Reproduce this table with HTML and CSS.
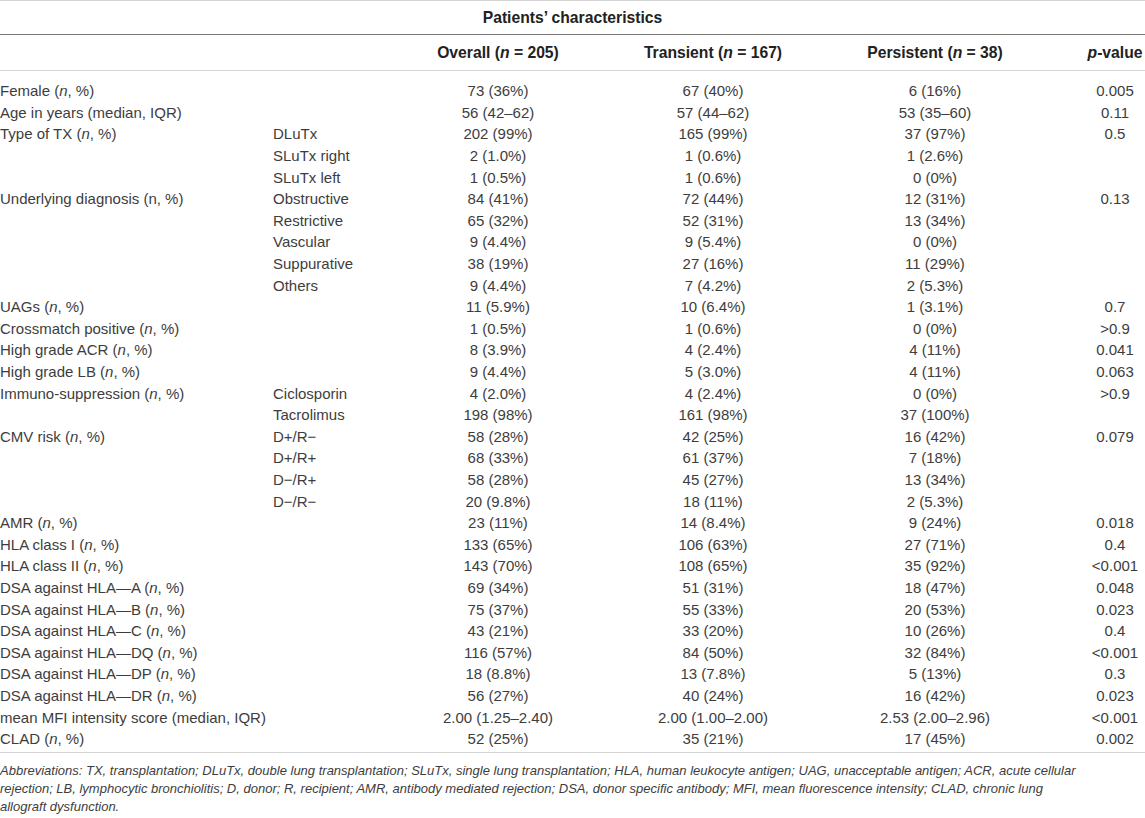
FILE: index.html
```html
<!DOCTYPE html>
<html>
<head>
<meta charset="utf-8">
<link rel="stylesheet" href="styles.css">
</head>
<body>
<table class="tbl">
  <colgroup>
    <col class="c-label"><col class="c-sub"><col class="c-overall"><col class="c-trans"><col class="c-pers"><col class="c-p">
  </colgroup>
  <thead>
    <tr class="title-row"><th colspan="6">Patients’ characteristics</th></tr>
    <tr class="head-row">
      <th></th><th></th>
      <th>Overall (<i>n</i> = 205)</th>
      <th>Transient (<i>n</i> = 167)</th>
      <th>Persistent (<i>n</i> = 38)</th>
      <th class="pv"><i>p</i>-value</th>
    </tr>
  </thead>
  <tbody>
    <tr class="first"><td>Female (<i>n</i>, %)</td><td></td><td>73 (36%)</td><td>67 (40%)</td><td>6 (16%)</td><td class="pv">0.005</td></tr>
    <tr><td>Age in years (median, IQR)</td><td></td><td>56 (42–62)</td><td>57 (44–62)</td><td>53 (35–60)</td><td class="pv">0.11</td></tr>
    <tr><td>Type of TX (<i>n</i>, %)</td><td>DLuTx</td><td>202 (99%)</td><td>165 (99%)</td><td>37 (97%)</td><td class="pv">0.5</td></tr>
    <tr><td></td><td>SLuTx right</td><td>2 (1.0%)</td><td>1 (0.6%)</td><td>1 (2.6%)</td><td class="pv"></td></tr>
    <tr><td></td><td>SLuTx left</td><td>1 (0.5%)</td><td>1 (0.6%)</td><td>0 (0%)</td><td class="pv"></td></tr>
    <tr><td>Underlying diagnosis (n, %)</td><td>Obstructive</td><td>84 (41%)</td><td>72 (44%)</td><td>12 (31%)</td><td class="pv">0.13</td></tr>
    <tr><td></td><td>Restrictive</td><td>65 (32%)</td><td>52 (31%)</td><td>13 (34%)</td><td class="pv"></td></tr>
    <tr><td></td><td>Vascular</td><td>9 (4.4%)</td><td>9 (5.4%)</td><td>0 (0%)</td><td class="pv"></td></tr>
    <tr><td></td><td>Suppurative</td><td>38 (19%)</td><td>27 (16%)</td><td>11 (29%)</td><td class="pv"></td></tr>
    <tr><td></td><td>Others</td><td>9 (4.4%)</td><td>7 (4.2%)</td><td>2 (5.3%)</td><td class="pv"></td></tr>
    <tr><td>UAGs (<i>n</i>, %)</td><td></td><td>11 (5.9%)</td><td>10 (6.4%)</td><td>1 (3.1%)</td><td class="pv">0.7</td></tr>
    <tr><td>Crossmatch positive (<i>n</i>, %)</td><td></td><td>1 (0.5%)</td><td>1 (0.6%)</td><td>0 (0%)</td><td class="pv">&gt;0.9</td></tr>
    <tr><td>High grade ACR (<i>n</i>, %)</td><td></td><td>8 (3.9%)</td><td>4 (2.4%)</td><td>4 (11%)</td><td class="pv">0.041</td></tr>
    <tr><td>High grade LB (<i>n</i>, %)</td><td></td><td>9 (4.4%)</td><td>5 (3.0%)</td><td>4 (11%)</td><td class="pv">0.063</td></tr>
    <tr><td>Immuno-suppression (<i>n</i>, %)</td><td>Ciclosporin</td><td>4 (2.0%)</td><td>4 (2.4%)</td><td>0 (0%)</td><td class="pv">&gt;0.9</td></tr>
    <tr><td></td><td>Tacrolimus</td><td>198 (98%)</td><td>161 (98%)</td><td>37 (100%)</td><td class="pv"></td></tr>
    <tr><td>CMV risk (<i>n</i>, %)</td><td>D+/R−</td><td>58 (28%)</td><td>42 (25%)</td><td>16 (42%)</td><td class="pv">0.079</td></tr>
    <tr><td></td><td>D+/R+</td><td>68 (33%)</td><td>61 (37%)</td><td>7 (18%)</td><td class="pv"></td></tr>
    <tr><td></td><td>D−/R+</td><td>58 (28%)</td><td>45 (27%)</td><td>13 (34%)</td><td class="pv"></td></tr>
    <tr><td></td><td>D−/R−</td><td>20 (9.8%)</td><td>18 (11%)</td><td>2 (5.3%)</td><td class="pv"></td></tr>
    <tr><td>AMR (<i>n</i>, %)</td><td></td><td>23 (11%)</td><td>14 (8.4%)</td><td>9 (24%)</td><td class="pv">0.018</td></tr>
    <tr><td>HLA class I (<i>n</i>, %)</td><td></td><td>133 (65%)</td><td>106 (63%)</td><td>27 (71%)</td><td class="pv">0.4</td></tr>
    <tr><td>HLA class II (<i>n</i>, %)</td><td></td><td>143 (70%)</td><td>108 (65%)</td><td>35 (92%)</td><td class="pv">&lt;0.001</td></tr>
    <tr><td>DSA against HLA—A (<i>n</i>, %)</td><td></td><td>69 (34%)</td><td>51 (31%)</td><td>18 (47%)</td><td class="pv">0.048</td></tr>
    <tr><td>DSA against HLA—B (<i>n</i>, %)</td><td></td><td>75 (37%)</td><td>55 (33%)</td><td>20 (53%)</td><td class="pv">0.023</td></tr>
    <tr><td>DSA against HLA—C (<i>n</i>, %)</td><td></td><td>43 (21%)</td><td>33 (20%)</td><td>10 (26%)</td><td class="pv">0.4</td></tr>
    <tr><td>DSA against HLA—DQ (<i>n</i>, %)</td><td></td><td>116 (57%)</td><td>84 (50%)</td><td>32 (84%)</td><td class="pv">&lt;0.001</td></tr>
    <tr><td>DSA against HLA—DP (<i>n</i>, %)</td><td></td><td>18 (8.8%)</td><td>13 (7.8%)</td><td>5 (13%)</td><td class="pv">0.3</td></tr>
    <tr><td>DSA against HLA—DR (<i>n</i>, %)</td><td></td><td>56 (27%)</td><td>40 (24%)</td><td>16 (42%)</td><td class="pv">0.023</td></tr>
    <tr><td>mean MFI intensity score (median, IQR)</td><td></td><td>2.00 (1.25–2.40)</td><td>2.00 (1.00–2.00)</td><td>2.53 (2.00–2.96)</td><td class="pv">&lt;0.001</td></tr>
    <tr class="last"><td>CLAD (<i>n</i>, %)</td><td></td><td>52 (25%)</td><td>35 (21%)</td><td>17 (45%)</td><td class="pv">0.002</td></tr>
  </tbody>
</table>
<p class="foot">Abbreviations: TX, transplantation; DLuTx, double lung transplantation; SLuTx, single lung transplantation; HLA, human leukocyte antigen; UAG, unacceptable antigen; ACR, acute cellular<br>rejection; LB, lymphocytic bronchiolitis; D, donor; R, recipient; AMR, antibody mediated rejection; DSA, donor specific antibody; MFI, mean fluorescence intensity; CLAD, chronic lung<br>allograft dysfunction.</p>
</body>
</html>
```
FILE: styles.css
```css
html, body {
  margin: 0;
  padding: 0;
  background: #fff;
}
body {
  font-family: "Liberation Sans", Arial, sans-serif;
  color: #3d3d3d;
  width: 1145px;
}
.tbl {
  width: 1145px;
  border-collapse: collapse;
  table-layout: fixed;
  font-size: 15px;
  border-top: 1px solid #d4d4d4;
}
.c-label { width: 273px; }
.c-sub { width: 127px; }
.c-overall { width: 196px; }
.c-trans { width: 234px; }
.c-pers { width: 210px; }
.c-p { width: 105px; }
th, td {
  padding: 0;
  white-space: nowrap;
}
td {
  text-align: center;
  height: 21.6px;
  line-height: 21px;
}
td:first-child, td:nth-child(2) {
  text-align: left;
}
td.pv, th.pv {
  padding-left: 45px;
}
th {
  font-weight: bold;
  font-size: 15.7px;
  color: #222;
  text-align: center;
}
.title-row th {
  height: 33px;
  border-bottom: 1px solid #777;
}
.head-row th {
  height: 35px;
  border-bottom: 1px solid #d4d4d4;
}
tbody tr.first td {
  padding-top: 9px;
}
tbody tr.last td {
  padding-bottom: 3px;
  border-bottom: 1px solid #d4d4d4;
}
.foot {
  margin: 9px 0 0;
  font-size: 13px;
  line-height: 18px;
  font-style: italic;
  color: #3d3d3d;
}
```
